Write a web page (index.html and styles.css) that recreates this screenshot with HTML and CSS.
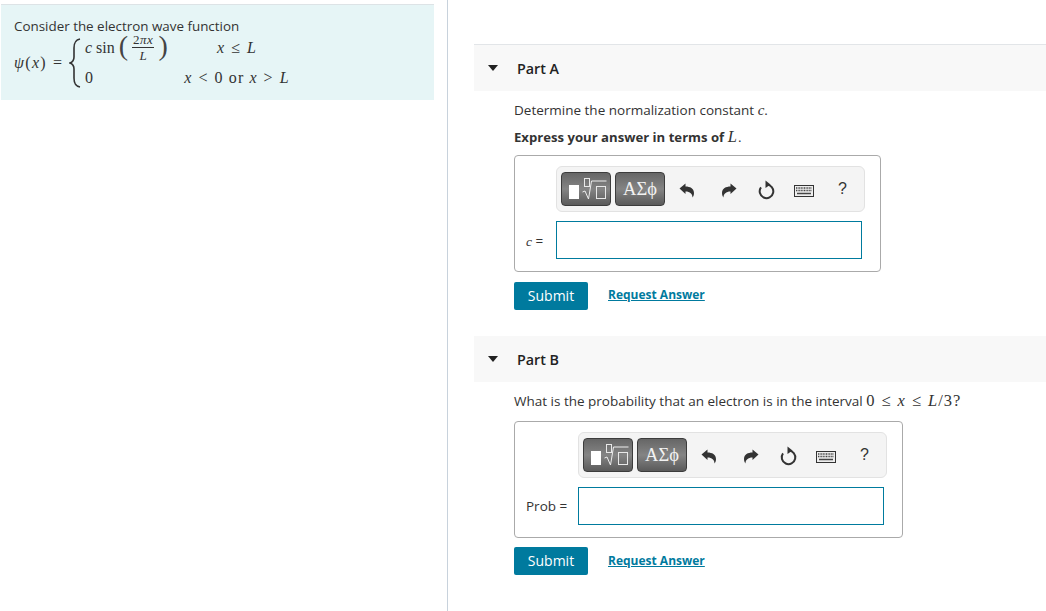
FILE: index.html
```html
<!DOCTYPE html>
<html lang="en">
<head>
<meta charset="utf-8">
<title>Electron wave function</title>
<link rel="stylesheet" href="styles.css">
</head>
<body>
<svg class="defs" width="0" height="0" aria-hidden="true">
  <symbol id="i-tmpl" viewBox="0 0 50 34">
    <rect x="8" y="13" width="10" height="14" fill="#fff"/>
    <rect x="23.500" y="6.500" width="5" height="8" fill="none" stroke="#e8e8e8"/>
    <path d="M21.500 20l2.500-1 3.500 8 3-18h15" fill="none" stroke="#eee" stroke-width="1"/>
    <rect x="35.500" y="14.500" width="9" height="12" fill="none" stroke="#e8e8e8"/>
  </symbol>
  <symbol id="i-undo" viewBox="0 0 16 16">
    <path d="M0.500 6.500L6.500 1.500V4.500C11 4.500 15 6.500 15 11c0 1.800-.5 3.200-1.500 4.500 0-3.500-2.500-6-7-6V12z" fill="#333"/>
  </symbol>
  <symbol id="i-redo" viewBox="0 0 16 16">
    <path d="M15.500 6.500L9.500 1.500V4.500C5 4.500 1 6.500 1 11c0 1.800.5 3.200 1.500 4.500 0-3.500 2.500-6 7-6V12z" fill="#333"/>
  </symbol>
  <symbol id="i-reset" viewBox="0 0 18 20">
    <path d="M9.500 4.500a6.800 6.800 0 1 1-5.500 2.800" fill="none" stroke="#333" stroke-width="2"/>
    <path d="M8.500 0.500l5 4-5 3.500z" fill="#333"/>
  </symbol>
  <symbol id="i-keys" viewBox="0 0 20 12">
    <rect x=".5" y=".5" width="19" height="11" fill="#eee" stroke="#333"/>
    <path d="M2 3h16M2 5.500h16" stroke="#444" stroke-width="1.300" stroke-dasharray="1 .6"/>
    <path d="M3 8.500h14" stroke="#444" stroke-width="1.500"/>
  </symbol>
</svg>
<div class="page">
  <aside class="left">
    <div class="intro">
      <p class="intro-text">Consider the electron wave function</p>
      <div class="formula">
        <span class="lhs"><i>ψ</i>(<i>x</i>)<span class="op">=</span></span>
        <svg class="brace" width="12" height="50" viewBox="0 0 12 50"><path d="M11 1C6 2 5 5 5 10v9c0 3-1 5-4 6 3 1 4 3 4 6v9c0 5 1 8 6 9" fill="none" stroke="#333" stroke-width="1.600"/></svg>
        <div class="cases">
          <span class="case-val"><span><i>c</i> sin</span><span class="paren">(</span><span class="frac"><span class="num">2<i>πx</i></span><span class="den"><i>L</i></span></span><span class="paren">)</span></span>
          <span class="case-cond"><i>x</i><span class="op">≤</span><i>L</i></span>
          <span class="case-val">0</span>
          <span class="case-cond"><i>x</i><span class="op">&lt;</span>0 or <i>x</i><span class="op">&gt;</span><i>L</i></span>
        </div>
      </div>
    </div>
  </aside>
  <main class="right">
    <section class="part part-a">
      <header class="part-head"><span class="tri"></span><h2>Part A</h2></header>
      <div class="part-body">
        <p class="q">Determine the normalization constant <i class="m mc">c</i>.</p>
        <p class="q q-b"><b>Express your answer in terms of</b> <i class="m">L</i>.</p>
        <div class="answer ans-a">
          <div class="toolbar">
            <span class="tbtn"><svg width="50" height="34"><use href="#i-tmpl"/></svg></span>
            <span class="tbtn sym">ΑΣϕ</span>
            <span class="tools">
              <svg class="t-undo" width="16" height="16"><use href="#i-undo"/></svg>
              <svg class="t-redo" width="16" height="16"><use href="#i-redo"/></svg>
              <svg class="t-reset" width="18" height="20"><use href="#i-reset"/></svg>
              <svg class="t-keys" width="20" height="12"><use href="#i-keys"/></svg>
              <span class="t-help">?</span>
            </span>
          </div>
          <div class="inrow"><label class="lab"><i class="m">c</i> =</label><span class="field"></span></div>
        </div>
        <div class="actions"><span class="submit">Submit</span><a class="req">Request Answer</a></div>
      </div>
    </section>
    <section class="part part-b">
      <header class="part-head"><span class="tri"></span><h2>Part B</h2></header>
      <div class="part-body">
        <p class="q">What is the probability that an electron is in the interval <span class="m">0<span class="op">≤</span><i>x</i><span class="op">≤</span><i>L</i>/3?</span></p>
        <div class="answer ans-b">
          <div class="toolbar">
            <span class="tbtn"><svg width="50" height="34"><use href="#i-tmpl"/></svg></span>
            <span class="tbtn sym">ΑΣϕ</span>
            <span class="tools">
              <svg class="t-undo" width="16" height="16"><use href="#i-undo"/></svg>
              <svg class="t-redo" width="16" height="16"><use href="#i-redo"/></svg>
              <svg class="t-reset" width="18" height="20"><use href="#i-reset"/></svg>
              <svg class="t-keys" width="20" height="12"><use href="#i-keys"/></svg>
              <span class="t-help">?</span>
            </span>
          </div>
          <div class="inrow"><label class="lab">Prob =</label><span class="field"></span></div>
        </div>
        <div class="actions"><span class="submit">Submit</span><a class="req">Request Answer</a></div>
      </div>
    </section>
  </main>
</div>
</body>
</html>
```
FILE: styles.css
```css
* { box-sizing: border-box; }
html, body { margin: 0; padding: 0; background: #fff; }
body { font-family: "Open Sans", sans-serif; font-size: 13.5px; color: #333; width: 1046px; height: 611px; overflow: hidden; }
.defs { display: block; height: 0; }
.page { display: flex; height: 611px; }

.left { width: 448px; flex: none; border-right: 1px solid #c8d2dc; padding: 4px 13px 0 1px; }
.intro { height: 96px; background: #e6f5f6; border-top: 1px solid #dde3e6; padding: 13px 0 0 13px; }
.intro-text { margin: 0; font-size: 13.4px; line-height: 16px; color: #333; }

.formula { display: flex; align-items: center; font-family: "Liberation Serif", serif; font-size: 16px; color: #333; margin-top: -1px; height: 60px; }
.lhs { width: 55px; flex: none; white-space: nowrap; letter-spacing: 1.300px; }
.op { margin: 0 6px; }
.brace { flex: none; margin-right: 4px; }
.cases { display: grid; grid-template-columns: 98px 108px; grid-template-rows: 30px 30px; align-items: center; }
.case-val { display: flex; align-items: center; gap: 4px; white-space: pre; height: 30px; }
.case-cond { text-align: center; white-space: nowrap; letter-spacing: 1.100px; }
.paren { font-size: 28px; font-weight: 400; line-height: 26px; color: #444; margin-top: -4px; }
.frac { display: inline-flex; flex-direction: column; align-items: center; font-size: 13px; line-height: 15px; margin: -2px 0 0; letter-spacing: .5px; }
.num { border-bottom: 1px solid #333; padding: 0 1px; }
.m { font-family: "Liberation Serif", serif; font-size: 16.500px; letter-spacing: 1px; }
.mc { font-size: 15px; letter-spacing: 0; }
i { font-style: italic; }

.right { flex: 1; padding: 44px 0 0 26px; min-width: 0; }
.part-head { height: 47px; background: #f8f8f8; border-top: 1px solid #e2e5e8; display: flex; align-items: center; padding-left: 14px; }
.part-b .part-head { height: 46px; border-top: 0; }
.tri { width: 0; height: 0; border-left: 5.500px solid transparent; border-right: 5.500px solid transparent; border-top: 6px solid #222; margin-right: 19px; }
.part-head h2 { margin: 2px 0 0; font-size: 14.300px; line-height: 20px; font-weight: 600; color: #222; }
.part-body { padding-left: 40px; }
.part-a .part-body { padding-top: 10px; height: 245px; }
.part-b .part-body { padding-top: 10px; }
.q { margin: 0; font-size: 13.500px; line-height: 18px; height: 18px; white-space: nowrap; }
.q-b { margin-top: 9px; }
.q b { font-weight: 700; font-size: 13.150px; }

.answer { border: 1px solid #aaa; border-radius: 4px; height: 117px; padding: 10px 0 0 41px; margin-top: 9px; }
.ans-a { width: 367px; }
.ans-b { width: 389px; padding-left: 63px; margin-top: 11px; }
.toolbar { width: 309px; height: 46px; background: #f4f4f4; border: 1px solid #e2e2e2; border-radius: 6px; display: flex; align-items: center; padding-left: 4px; gap: 4px; }
.tbtn { width: 50px; height: 34px; flex: none; border: 1px solid #3c3c3c; border-radius: 4px; background: linear-gradient(#666, #848484 50%, #5a5a5a); color: #f2f2f2; display: flex; align-items: center; justify-content: center; overflow: hidden; }
.tbtn svg { flex: none; margin: -1px; }
.sym { font-family: "Liberation Serif", serif; font-size: 18.500px; }
.tools { display: flex; align-items: center; margin-left: 10px; }
.t-undo { margin-top: 1px; }
.t-redo { margin-left: 26px; margin-top: 1px; }
.t-reset { margin-left: 20px; margin-top: 1px; }
.t-keys { margin-left: 19px; margin-top: 3px; }
.t-help { margin-left: 24px; font-family: "Liberation Sans", sans-serif; font-size: 16px; color: #333; }

.inrow { display: flex; align-items: center; margin-top: 9px; margin-left: -41px; padding-left: 11px; }
.ans-b .inrow { margin-left: -63px; }
.lab { width: 30px; padding-top: 1px; font-size: 13.500px; white-space: nowrap; flex: none; }
.ans-b .lab { width: 52px; padding-top: 0; padding-bottom: 1px; }
.lab .m { font-size: 13.500px; letter-spacing: 0; }
.field { width: 306px; height: 38px; border: 1px solid #007b9e; background: #fff; flex: none; }

.actions { display: flex; align-items: center; margin-top: 10px; }
.part-b .actions { margin-top: 9px; }
.submit { width: 74px; height: 28px; padding-bottom: 2px; background: #007a9e; color: #fff; border-radius: 2px; font-size: 14px; display: flex; align-items: center; justify-content: center; }
.req { margin: 0 0 3px 20px; font-size: 12px; font-weight: 700; color: #007a9e; text-decoration: underline; }
.part-b .req { margin-bottom: 1px; }
```
